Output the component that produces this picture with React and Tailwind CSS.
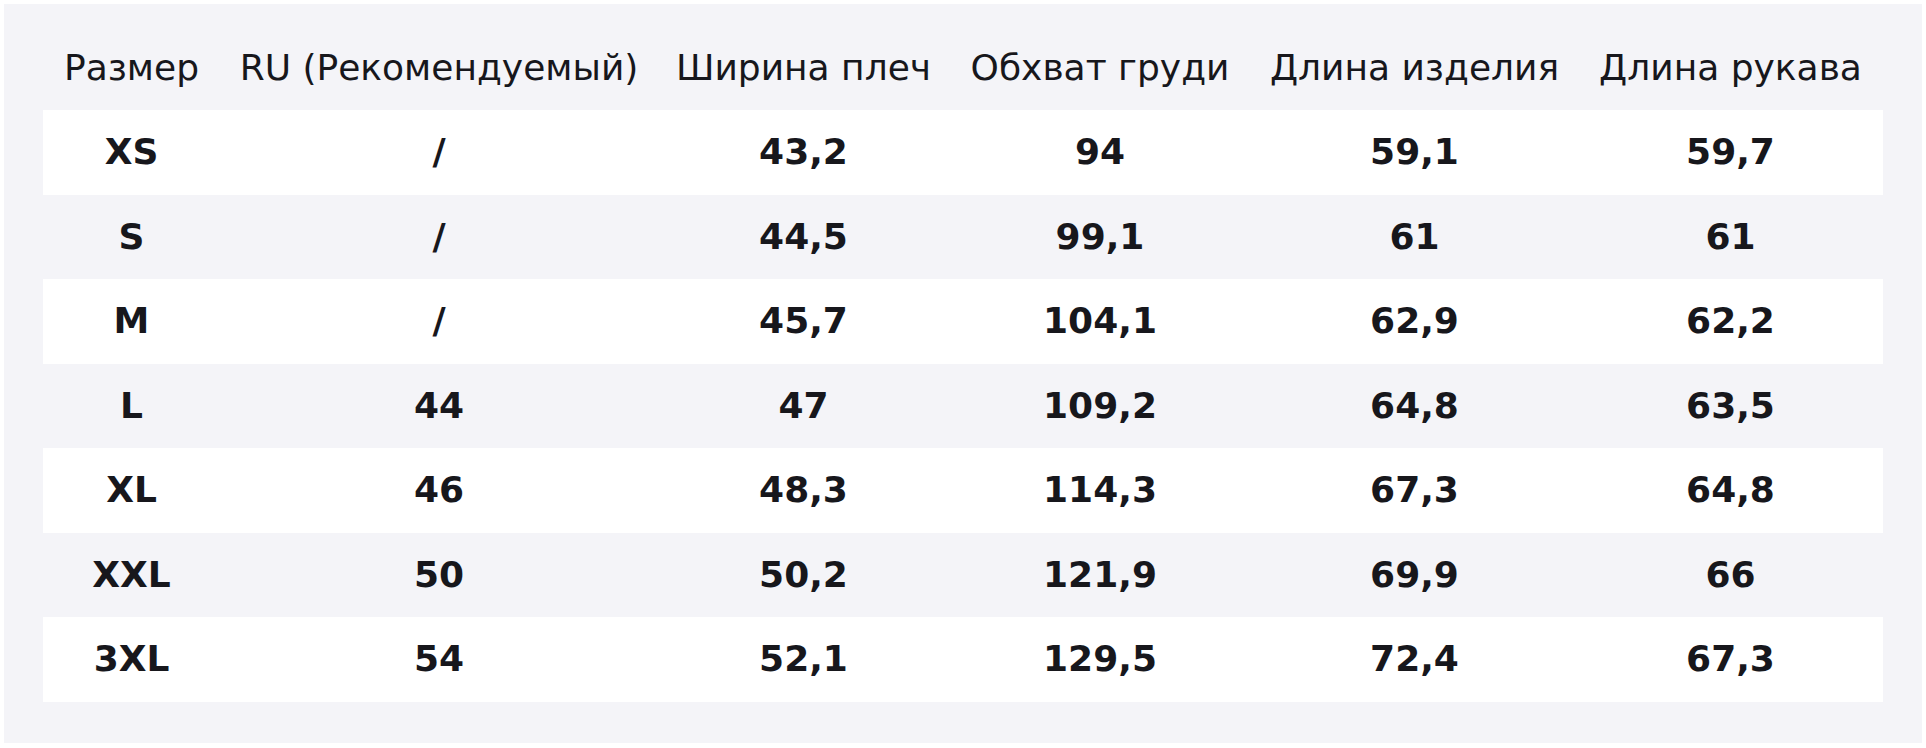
export default function App() {
  const headers = ["Размер", "RU (Рекомендуемый)", "Ширина плеч", "Обхват груди", "Длина изделия", "Длина рукава"];
  const rows = [
    ["XS", "/", "43,2", "94", "59,1", "59,7"],
    ["S", "/", "44,5", "99,1", "61", "61"],
    ["M", "/", "45,7", "104,1", "62,9", "62,2"],
    ["L", "44", "47", "109,2", "64,8", "63,5"],
    ["XL", "46", "48,3", "114,3", "67,3", "64,8"],
    ["XXL", "50", "50,2", "121,9", "69,9", "66"],
    ["3XL", "54", "52,1", "129,5", "72,4", "67,3"],
  ];
  const grid = "grid grid-cols-[177px_438px_291px_302px_327px_305px]";
  return (
    <div className="w-[1926px] h-[748px] bg-white p-[4px]" style={{ fontFamily: '"DejaVu Sans", sans-serif' }}>
      <div className="w-[1918px] h-[739px] bg-[#f4f4f8] pt-[21px] px-[39px] text-[#17171c]">
        <div className={`${grid} h-[85px] items-center text-[36px]`}>
          {headers.map((h) => (
            <div key={h} className="text-center whitespace-nowrap">{h}</div>
          ))}
        </div>
        {rows.map((r, i) => (
          <div key={i} className={`${grid} h-[84.5px] items-center text-[36px] font-bold ${i % 2 === 0 ? "bg-white" : ""}`}>
            {r.map((c, j) => (
              <div key={j} className="text-center whitespace-nowrap">{c}</div>
            ))}
          </div>
        ))}
      </div>
    </div>
  );
}
